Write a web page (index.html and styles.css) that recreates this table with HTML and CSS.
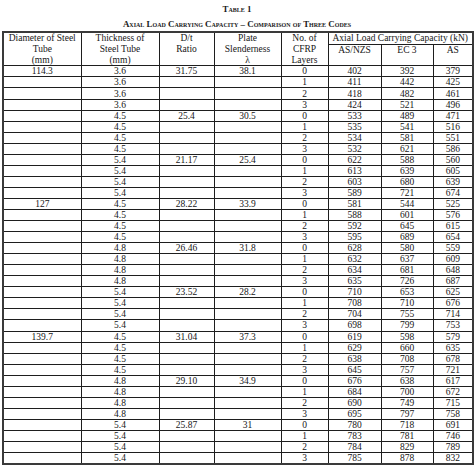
FILE: index.html
```html
<!DOCTYPE html>
<html>
<head>
<meta charset="utf-8">
<link rel="stylesheet" href="styles.css">
</head>
<body>
<div class="page">
  <div class="caption caption-num">Table 1</div>
  <div class="caption caption-title">Axial Load Carrying Capacity – Comparison of Three Codes</div>
  <table class="grid">
    <colgroup>
      <col class="c-dia"><col class="c-thk"><col class="c-dt"><col class="c-pl"><col class="c-cf"><col class="c-as"><col class="c-ec"><col class="c-au">
    </colgroup>
    <thead>
      <tr class="h1">
        <th rowspan="2">Diameter of Steel<br>Tube<br>(mm)</th>
        <th rowspan="2">Thickness of<br>Steel Tube<br>(mm)</th>
        <th rowspan="2">D/t<br>Ratio</th>
        <th rowspan="2">Plate<br>Slenderness<br>λ</th>
        <th rowspan="2">No. of<br>CFRP<br>Layers</th>
        <th colspan="3">Axial Load Carrying Capacity (kN)</th>
      </tr>
      <tr class="h2">
        <th>AS/NZS</th>
        <th>EC 3</th>
        <th>AS</th>
      </tr>
    </thead>
    <tbody>
      <tr><td>114.3</td><td>3.6</td><td>31.75</td><td>38.1</td><td>0</td><td>402</td><td>392</td><td>379</td></tr>
      <tr><td></td><td>3.6</td><td></td><td></td><td>1</td><td>411</td><td>442</td><td>425</td></tr>
      <tr><td></td><td>3.6</td><td></td><td></td><td>2</td><td>418</td><td>482</td><td>461</td></tr>
      <tr><td></td><td>3.6</td><td></td><td></td><td>3</td><td>424</td><td>521</td><td>496</td></tr>
      <tr><td></td><td>4.5</td><td>25.4</td><td>30.5</td><td>0</td><td>533</td><td>489</td><td>471</td></tr>
      <tr><td></td><td>4.5</td><td></td><td></td><td>1</td><td>535</td><td>541</td><td>516</td></tr>
      <tr><td></td><td>4.5</td><td></td><td></td><td>2</td><td>534</td><td>581</td><td>551</td></tr>
      <tr><td></td><td>4.5</td><td></td><td></td><td>3</td><td>532</td><td>621</td><td>586</td></tr>
      <tr><td></td><td>5.4</td><td>21.17</td><td>25.4</td><td>0</td><td>622</td><td>588</td><td>560</td></tr>
      <tr><td></td><td>5.4</td><td></td><td></td><td>1</td><td>613</td><td>639</td><td>605</td></tr>
      <tr><td></td><td>5.4</td><td></td><td></td><td>2</td><td>603</td><td>680</td><td>639</td></tr>
      <tr><td></td><td>5.4</td><td></td><td></td><td>3</td><td>589</td><td>721</td><td>674</td></tr>
      <tr><td>127</td><td>4.5</td><td>28.22</td><td>33.9</td><td>0</td><td>581</td><td>544</td><td>525</td></tr>
      <tr><td></td><td>4.5</td><td></td><td></td><td>1</td><td>588</td><td>601</td><td>576</td></tr>
      <tr><td></td><td>4.5</td><td></td><td></td><td>2</td><td>592</td><td>645</td><td>615</td></tr>
      <tr><td></td><td>4.5</td><td></td><td></td><td>3</td><td>595</td><td>689</td><td>654</td></tr>
      <tr><td></td><td>4.8</td><td>26.46</td><td>31.8</td><td>0</td><td>628</td><td>580</td><td>559</td></tr>
      <tr><td></td><td>4.8</td><td></td><td></td><td>1</td><td>632</td><td>637</td><td>609</td></tr>
      <tr><td></td><td>4.8</td><td></td><td></td><td>2</td><td>634</td><td>681</td><td>648</td></tr>
      <tr><td></td><td>4.8</td><td></td><td></td><td>3</td><td>635</td><td>726</td><td>687</td></tr>
      <tr><td></td><td>5.4</td><td>23.52</td><td>28.2</td><td>0</td><td>710</td><td>653</td><td>625</td></tr>
      <tr><td></td><td>5.4</td><td></td><td></td><td>1</td><td>708</td><td>710</td><td>676</td></tr>
      <tr><td></td><td>5.4</td><td></td><td></td><td>2</td><td>704</td><td>755</td><td>714</td></tr>
      <tr><td></td><td>5.4</td><td></td><td></td><td>3</td><td>698</td><td>799</td><td>753</td></tr>
      <tr><td>139.7</td><td>4.5</td><td>31.04</td><td>37.3</td><td>0</td><td>619</td><td>598</td><td>579</td></tr>
      <tr><td></td><td>4.5</td><td></td><td></td><td>1</td><td>629</td><td>660</td><td>635</td></tr>
      <tr><td></td><td>4.5</td><td></td><td></td><td>2</td><td>638</td><td>708</td><td>678</td></tr>
      <tr><td></td><td>4.5</td><td></td><td></td><td>3</td><td>645</td><td>757</td><td>721</td></tr>
      <tr><td></td><td>4.8</td><td>29.10</td><td>34.9</td><td>0</td><td>676</td><td>638</td><td>617</td></tr>
      <tr><td></td><td>4.8</td><td></td><td></td><td>1</td><td>684</td><td>700</td><td>672</td></tr>
      <tr><td></td><td>4.8</td><td></td><td></td><td>2</td><td>690</td><td>749</td><td>715</td></tr>
      <tr><td></td><td>4.8</td><td></td><td></td><td>3</td><td>695</td><td>797</td><td>758</td></tr>
      <tr><td></td><td>5.4</td><td>25.87</td><td>31</td><td>0</td><td>780</td><td>718</td><td>691</td></tr>
      <tr><td></td><td>5.4</td><td></td><td></td><td>1</td><td>783</td><td>781</td><td>746</td></tr>
      <tr><td></td><td>5.4</td><td></td><td></td><td>2</td><td>784</td><td>829</td><td>789</td></tr>
      <tr><td></td><td>5.4</td><td></td><td></td><td>3</td><td>785</td><td>878</td><td>832</td></tr>
    </tbody>
  </table>
</div>
</body>
</html>
```

FILE: styles.css
```css
html, body {
  margin: 0;
  padding: 0;
  background: #ffffff;
}

body {
  font-family: "Liberation Serif", "Times New Roman", serif;
  color: #161616;
}

.page {
  padding: 4px 0 0 2px;
}

.caption {
  text-align: center;
  font-weight: bold;
  font-variant: small-caps;
  font-size: 8.9px;
  line-height: 11px;
  color: #1a1a1a;
  padding-right: 2px;
}

.caption-title {
  margin-top: 4px;
}

.grid {
  margin-top: 1px;
  width: 470px;
  table-layout: fixed;
  border-collapse: collapse;
  border: 2px solid #3a3a3a;
  font-size: 9.5px;
}

.c-dia { width: 78px; }
.c-thk { width: 78px; }
.c-dt  { width: 55px; }
.c-pl  { width: 67px; }
.c-cf  { width: 47px; }
.c-as  { width: 53px; }
.c-ec  { width: 52px; }
.c-au  { width: 40px; }

.grid th,
.grid td {
  border: 1px solid #1e1e1e;
  padding: 0;
  text-align: center;
  white-space: nowrap;
  overflow: hidden;
}

.grid th {
  font-weight: normal;
  vertical-align: top;
  line-height: 10.8px;
}

.h1 th[colspan] {
  height: 10px;
}

.h2 th {
  height: 20px;
}

.grid td {
  height: 10.05px;
  line-height: 10px;
  vertical-align: middle;
}
```
